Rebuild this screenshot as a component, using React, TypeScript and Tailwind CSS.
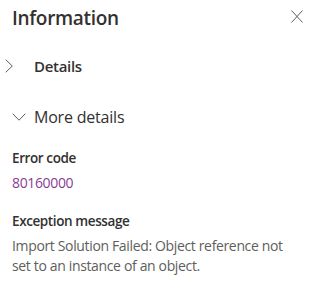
import React from "react";

export default function App() {
  return (
    <div
      className="w-[310px] h-[293px] bg-white overflow-hidden"
      style={{ fontFamily: '"Open Sans", "Noto Sans", sans-serif' }}
    >
      <div className="pt-[4px] pl-[12px] pr-[7px] flex items-center justify-between h-[32px]">
        <h1 className="text-[19px] leading-[28px] font-semibold text-[#323130] tracking-[-0.3px]">
          Information
        </h1>
        <svg width="12" height="13" viewBox="0 0 12 13" className="mt-[-3px]">
          <path d="M0.5 0.5 L11.5 12.5 M11.5 0.5 L0.5 12.5" stroke="#605e5c" strokeWidth="1" fill="none" />
        </svg>
      </div>

      <div className="mt-[23px] h-[22px] flex items-center pl-[5px]">
        <svg width="8" height="14" viewBox="0 0 8 14">
          <path d="M0.7 0.7 L7.3 7 L0.7 13.3" stroke="#605e5c" strokeWidth="1" fill="none" />
        </svg>
        <span className="ml-[21px] text-[15px] leading-[22px] font-semibold text-[#323130] tracking-[-0.3px]">
          Details
        </span>
      </div>

      <div className="mt-[29px] h-[22px] flex items-center pl-[12px]">
        <svg width="14" height="8" viewBox="0 0 14 8">
          <path d="M0.7 0.7 L7 7.2 L13.3 0.7" stroke="#605e5c" strokeWidth="1" fill="none" />
        </svg>
        <span className="ml-[8px] text-[16px] leading-[22px] text-[#323130] tracking-[-0.2px]">
          More details
        </span>
      </div>

      <div className="pl-[12px] pr-[12px] text-[14px] leading-[20px] tracking-[-0.35px]">
        <div className="mt-[20px] font-semibold text-[13.5px] tracking-[-0.4px] text-[#323130]">Error code</div>
        <div className="mt-[5px] text-[#8a3c95]">80160000</div>
        <div className="mt-[18px] font-semibold text-[13.5px] tracking-[-0.4px] text-[#323130]">Exception message</div>
        <div className="mt-[5px] text-[#605e5c]">
          Import Solution Failed: Object reference not
          <br />
          set to an instance of an object.
        </div>
      </div>
    </div>
  );
}
